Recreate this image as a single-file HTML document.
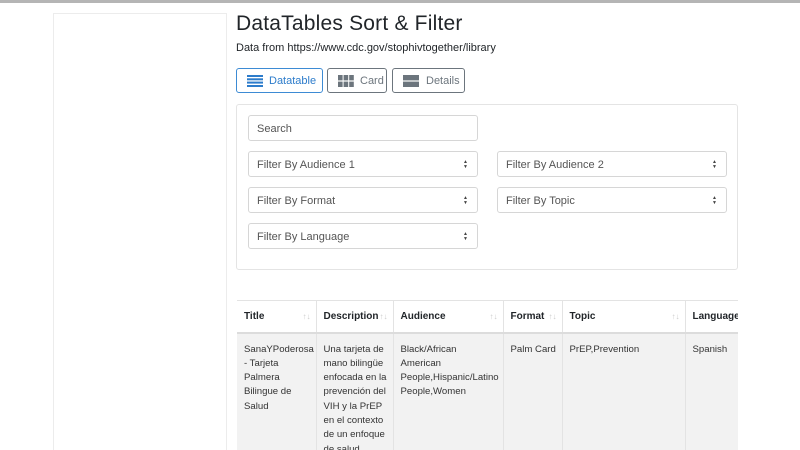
<!DOCTYPE html>
<html><head><style>
*{box-sizing:border-box;margin:0;padding:0}
html,body{width:800px;height:450px;overflow:hidden}
body{background:#fff;font-family:"Liberation Sans",sans-serif;color:#212529;position:relative}
.top{position:absolute;left:0;top:0;width:800px;height:3px;background:#b5b5b5}
.side{position:absolute;left:53px;top:13px;width:174px;height:437px;border:1px solid #ececec;border-bottom:none}
h1{position:absolute;left:236px;top:12px;font-size:21px;font-weight:normal;letter-spacing:.2px}
.sub{position:absolute;left:236px;top:42px;font-size:11px}
.btn{position:absolute;top:68px;height:25px;border:1px solid #6c757d;border-radius:3px;font-size:11px;color:#6c757d;display:flex;align-items:center;padding-left:10px;white-space:nowrap}
.btn.a{border-color:#3d8bd4;color:#2d7ccb}
.card{position:absolute;left:236px;top:104px;width:502px;height:166px;border:1px solid #e4e4e4;border-radius:3px}
.f{position:absolute;height:26px;border:1px solid #d6d6d6;border-radius:3px;font-size:11px;color:#555;padding:7px 8px;width:230px}
.f .ar{position:absolute;right:9px;top:8px;font-size:5px;line-height:5px;color:#444}
.wrap{position:absolute;left:237px;top:300px;width:501px;height:150px;overflow:hidden}
table{position:absolute;left:0;top:0;border-collapse:collapse;font-size:10px;table-layout:fixed;width:560px}
th{height:32px;text-align:left;padding:0 7px;border-right:1px solid #e3e3e3;border-top:1px solid #e3e3e3;border-bottom:2px solid #dcdcdc;font-weight:bold;position:relative;white-space:nowrap;overflow:hidden}
th span{position:absolute;right:5px;top:11px;color:#ccc;font-weight:normal;font-size:8px}
td{background:#f2f2f2;vertical-align:top;padding:9px 5px 9px 7px;border-right:1px solid #e3e3e3;line-height:14.3px;color:#333;height:130px;font-size:9.6px}
</style></head><body>
<div class="top"></div>
<div class="side"></div>
<h1>DataTables Sort &amp; Filter</h1>
<div class="sub">Data from https://www.cdc.gov/stophivtogether/library</div>
<div class="btn a" style="left:236px;width:87px"><svg width="16" height="12" style="margin-right:6px"><rect y="0" width="16" height="2" fill="#2d7ccb"/><rect y="3.3" width="16" height="2" fill="#2d7ccb"/><rect y="6.6" width="16" height="2" fill="#2d7ccb"/><rect y="10" width="16" height="2" fill="#2d7ccb"/></svg>Datatable</div>
<div class="btn" style="left:327px;width:60px"><svg width="16" height="12" style="margin-right:6px"><g fill="#6c757d"><rect x="0" y="0" width="4.6" height="5.4"/><rect x="5.6" y="0" width="4.6" height="5.4"/><rect x="11.2" y="0" width="4.6" height="5.4"/><rect x="0" y="6.6" width="4.6" height="5.4"/><rect x="5.6" y="6.6" width="4.6" height="5.4"/><rect x="11.2" y="6.6" width="4.6" height="5.4"/></g></svg>Card</div>
<div class="btn" style="left:392px;width:73px"><svg width="16" height="12" style="margin-right:7px"><g fill="#6c757d"><rect y="0" width="16" height="5.4"/><rect y="6.6" width="16" height="5.4"/></g></svg>Details</div>
<div class="card"></div>
<div class="f" style="left:248px;top:115px">Search</div>
<div class="f" style="left:248px;top:151px">Filter By Audience 1<div class="ar">▲<br>▼</div></div>
<div class="f" style="left:497px;top:151px">Filter By Audience 2<div class="ar">▲<br>▼</div></div>
<div class="f" style="left:248px;top:187px">Filter By Format<div class="ar">▲<br>▼</div></div>
<div class="f" style="left:497px;top:187px">Filter By Topic<div class="ar">▲<br>▼</div></div>
<div class="f" style="left:248px;top:223px">Filter By Language<div class="ar">▲<br>▼</div></div>
<div class="wrap"><table>
<colgroup><col style="width:79px"><col style="width:77px"><col style="width:110px"><col style="width:59px"><col style="width:123px"><col style="width:112px"></colgroup>
<tr><th>Title<span>↑↓</span></th><th>Description<span>↑↓</span></th><th>Audience<span>↑↓</span></th><th>Format<span>↑↓</span></th><th>Topic<span>↑↓</span></th><th>Language</th></tr>
<tr><td>SanaYPoderosa - Tarjeta Palmera Bilingue de Salud</td><td>Una tarjeta de mano bilingüe enfocada en la prevención del VIH y la PrEP en el contexto de un enfoque de salud</td><td>Black/African American People,Hispanic/Latino People,Women</td><td>Palm Card</td><td>PrEP,Prevention</td><td>Spanish</td></tr>
</table></div>
</body></html>
